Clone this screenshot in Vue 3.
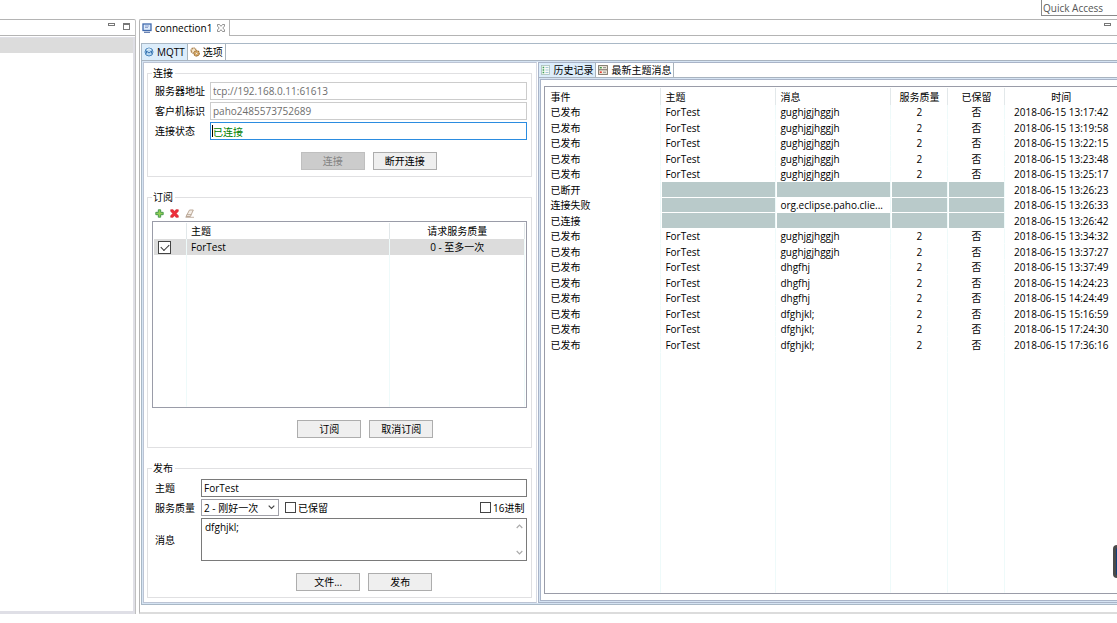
<script setup>
import { ref } from 'vue'

const server = ref('tcp://192.168.0.11:61613')
const clientId = ref('paho2485573752689')
const status = ref('已连接')
const topic = ref('ForTest')
const qos = ref('2 - 刚好一次')
const retained = ref(false)
const hex = ref(false)
const message = ref('dfghjkl;')
const subscribed = ref(true)

const published = (msg, time) => ({ event: '已发布', topic: 'ForTest', msg, qos: '2', retained: '否', time: '2018-06-15 ' + time })
const state = (event, msg, time) => ({ event, topic: '', msg, qos: '', retained: '', time: '2018-06-15 ' + time })

const history = [
  published('gughjgjhggjh', '13:17:42'),
  published('gughjgjhggjh', '13:19:58'),
  published('gughjgjhggjh', '13:22:15'),
  published('gughjgjhggjh', '13:23:48'),
  published('gughjgjhggjh', '13:25:17'),
  state('已断开', '', '13:26:23'),
  state('连接失败', 'org.eclipse.paho.clie...', '13:26:33'),
  state('已连接', '', '13:26:42'),
  published('gughjgjhggjh', '13:34:32'),
  published('gughjgjhggjh', '13:37:27'),
  published('dhgfhj', '13:37:49'),
  published('dhgfhj', '14:24:23'),
  published('dhgfhj', '14:24:49'),
  published('dfghjkl;', '15:16:59'),
  published('dfghjkl;', '17:24:30'),
  published('dfghjkl;', '17:36:16'),
]
</script>

<template>
  <div class="app">
    <header class="toolbar">
      <input class="quick" type="text" placeholder="Quick Access" aria-label="Quick Access" />
    </header>

    <div class="workbench">
      <aside class="navigator">
        <div class="nav-head">
          <button class="icon-btn" aria-label="最小化">
            <svg width="8" height="8" viewBox="0 0 8 8"><rect x="0.5" y="0.5" width="6" height="2" fill="#fff" stroke="#777" /></svg>
          </button>
          <button class="icon-btn" aria-label="最大化">
            <svg width="8" height="8" viewBox="0 0 8 8"><rect x="0.5" y="0.5" width="6" height="6" fill="#fff" stroke="#777" /><path d="M0 1.5h7" stroke="#777" /></svg>
          </button>
        </div>
        <div class="nav-body"><div class="nav-row"></div></div>
      </aside>

      <main class="editor">
        <div class="editor-head">
          <div class="editor-tab">
            <svg width="10" height="10" viewBox="0 0 10 10">
              <rect x="1" y="1" width="8" height="6.5" fill="#dceafa" stroke="#3f69ad" stroke-width="1.3" />
              <path d="M3 3h4M3 4.5h3" stroke="#7f93c4" stroke-width="0.8" />
              <path d="M2 9.3h6" stroke="#5b76ad" stroke-width="1.2" />
            </svg>
            <span>connection1</span>
            <button class="icon-btn" aria-label="关闭">
              <svg width="8" height="8" viewBox="0 0 8 8"><path d="M0.5 0.5h2l1.5 1.8L5.5 0.5h2v1.6L5.8 4l1.7 1.9v1.6h-2L4 5.7 2.500 7.500h-2V5.900L2.200 4 0.500 2.100z" fill="#fff" stroke="#777" stroke-width="0.8" /></svg>
            </button>
          </div>
          <div class="editor-rest">
            <button class="icon-btn" aria-label="最小化">
              <svg width="8" height="8" viewBox="0 0 8 8"><rect x="0.5" y="0.5" width="6" height="2" fill="#fff" stroke="#777" /></svg>
            </button>
          </div>
        </div>

        <section class="folder">
          <nav class="tabs">
            <button class="tab active">
              <svg width="10" height="10" viewBox="0 0 10 10">
                <circle cx="5" cy="5" r="4" fill="#b8d8f2" stroke="#4b86bd" />
                <path d="M2.500 6.500V4l2.500 2 2.500-2v2.500" fill="none" stroke="#3974b1" />
                <path d="M3 2.500q2-1.300 4 0" fill="none" stroke="#fff" stroke-width="0.8" />
              </svg>
              <span>MQTT</span>
            </button>
            <button class="tab">
              <svg width="10" height="10" viewBox="0 0 10 10">
                <circle cx="3.600" cy="3.600" r="2.500" fill="#f5e5c8" stroke="#a57c49" stroke-width="1.500" stroke-dasharray="1.200 0.700" />
                <circle cx="6.600" cy="6.400" r="2.600" fill="#edc078" stroke="#9a6d36" stroke-width="1.300" stroke-dasharray="1.400 0.500" />
                <circle cx="6.600" cy="6.400" r="1" fill="#fff" stroke="#a77b43" stroke-width="0.600" />
              </svg>
              <span>选项</span>
            </button>
          </nav>

          <div class="sash">
            <form class="form-pane" @submit.prevent>
              <fieldset class="group connect">
                <legend>连接</legend>
                <div class="fields wide">
                  <label for="server">服务器地址</label>
                  <input id="server" v-model="server" class="text muted" type="text" readonly />
                  <label for="client">客户机标识</label>
                  <input id="client" v-model="clientId" class="text muted" type="text" readonly />
                  <label for="status">连接状态</label>
                  <div class="status">
                    <input id="status" v-model="status" class="text focus" type="text" readonly />
                    <span class="caret"></span>
                  </div>
                  <div class="actions">
                    <button class="btn" disabled>连接</button>
                    <button class="btn">断开连接</button>
                  </div>
                </div>
              </fieldset>

              <fieldset class="group subs">
                <legend>订阅</legend>
                <div class="tools">
                  <button class="icon-btn" aria-label="添加">
                    <svg width="9" height="9" viewBox="0 0 9 9"><path d="M3.300 0.800h2.400v2.500h2.500v2.400H5.700v2.500H3.300V5.700H0.800V3.300h2.500z" fill="#92cf55" stroke="#3c9346" stroke-width="0.900" /></svg>
                  </button>
                  <button class="icon-btn" aria-label="删除">
                    <svg width="9" height="9" viewBox="0 0 9 9"><path d="M0.700 0.700h2.400L4.500 2.600 5.900 0.700h2.400v1.500L6.300 4.500l2 2.300v1.500H5.900L4.500 6.400 3.100 8.300H0.700V6.800l2-2.300-2-2.300z" fill="#ef2f3c" stroke="#cf2028" stroke-width="0.600" /></svg>
                  </button>
                  <button class="icon-btn" aria-label="清除">
                    <svg width="10" height="9" viewBox="0 0 10 9"><path d="M1 7.500L4.500 1h3.800L5.400 7.500zM1.800 5.700h4.300" fill="#f5eee7" stroke="#b4a08e" stroke-width="0.900" /><path d="M0.500 8.300h8.500" stroke="#b4a08e" stroke-width="0.800" /></svg>
                  </button>
                </div>
                <div class="table-box">
                  <table class="grid sub-grid">
                    <colgroup><col class="c-check" /><col class="c-topic" /><col /></colgroup>
                    <thead>
                      <tr><th></th><th>主题</th><th class="mid">请求服务质量</th></tr>
                    </thead>
                    <tbody>
                      <tr class="selected">
                        <td><input v-model="subscribed" class="check" type="checkbox" aria-label="ForTest" /></td>
                        <td>ForTest</td>
                        <td class="mid">0 - 至多一次</td>
                      </tr>
                      <tr class="filler"><td></td><td></td><td></td></tr>
                    </tbody>
                  </table>
                </div>
                <div class="actions">
                  <button class="btn">订阅</button>
                  <button class="btn">取消订阅</button>
                </div>
              </fieldset>

              <fieldset class="group publish">
                <legend>发布</legend>
                <div class="fields narrow">
                  <label for="topic">主题</label>
                  <input id="topic" v-model="topic" class="text" type="text" />
                  <label for="qos">服务质量</label>
                  <div class="options">
                    <div class="combo">
                      <select id="qos" v-model="qos">
                        <option>0 - 至多一次</option>
                        <option>1 - 至少一次</option>
                        <option>2 - 刚好一次</option>
                      </select>
                      <svg width="7" height="5" viewBox="0 0 7 5"><path d="M0.700 0.700L3.500 3.500 6.300 0.700" fill="none" stroke="#444" stroke-width="1.200" /></svg>
                    </div>
                    <label class="tick"><input v-model="retained" class="check" type="checkbox" />已保留</label>
                    <label class="tick end"><input v-model="hex" class="check" type="checkbox" />16进制</label>
                  </div>
                  <label for="message">消息</label>
                  <div class="area">
                    <textarea id="message" v-model="message"></textarea>
                    <div class="arrows">
                      <svg width="7" height="5" viewBox="0 0 7 5"><path d="M0.700 4L3.500 1.200 6.300 4" fill="none" stroke="#aaa" stroke-width="1.200" /></svg>
                      <svg width="7" height="5" viewBox="0 0 7 5"><path d="M0.700 1L3.500 3.800 6.300 1" fill="none" stroke="#aaa" stroke-width="1.200" /></svg>
                    </div>
                  </div>
                  <div class="actions">
                    <button class="btn">文件...</button>
                    <button class="btn">发布</button>
                  </div>
                </div>
              </fieldset>
            </form>

            <section class="history">
              <nav class="tabs inner">
                <button class="tab active">
                  <svg width="9" height="10" viewBox="0 0 9 10">
                    <rect x="0.500" y="0.500" width="8" height="9" fill="#f7fbf6" stroke="#a9bfb9" stroke-width="0.800" />
                    <path d="M1.600 2.500h1.600M1.600 5h1.600M1.600 7.500h1.600" stroke="#3f9f58" stroke-width="1.300" />
                    <path d="M4.500 2.500h3M4.500 5h3M4.500 7.500h3" stroke="#9cbfd8" stroke-width="0.900" />
                  </svg>
                  <span>历史记录</span>
                </button>
                <button class="tab">
                  <svg width="10" height="10" viewBox="0 0 10 10">
                    <rect x="0.600" y="0.600" width="8.800" height="8.800" fill="#f8f1e4" stroke="#7d7468" />
                    <path d="M1 4.800h8" stroke="#6d655a" />
                    <path d="M1.800 2.700h2" stroke="#3c9647" stroke-width="1.400" />
                    <path d="M1.800 7.200h2" stroke="#e33c30" stroke-width="1.600" />
                    <path d="M5 2.700h3M5 7.200h3" stroke="#777" stroke-width="0.900" />
                  </svg>
                  <span>最新主题消息</span>
                </button>
              </nav>
              <div class="history-body">
                <div class="table-box open">
                  <table class="grid log">
                    <colgroup>
                      <col class="c-wide" /><col class="c-wide" /><col class="c-wide" /><col class="c-slim" /><col class="c-slim" /><col />
                    </colgroup>
                    <thead>
                      <tr><th>事件</th><th>主题</th><th>消息</th><th class="mid">服务质量</th><th class="mid">已保留</th><th class="mid">时间</th></tr>
                    </thead>
                    <tbody>
                      <tr v-for="row in history" :key="row.time">
                        <td>{{ row.event }}</td>
                        <td :class="{ blank: !row.topic }">{{ row.topic }}</td>
                        <td :class="{ blank: !row.msg }">{{ row.msg }}</td>
                        <td class="mid" :class="{ blank: !row.qos }">{{ row.qos }}</td>
                        <td class="mid" :class="{ blank: !row.retained }">{{ row.retained }}</td>
                        <td class="mid">{{ row.time }}</td>
                      </tr>
                      <tr class="filler"><td></td><td></td><td></td><td></td><td></td><td></td></tr>
                    </tbody>
                  </table>
                </div>
              </div>
            </section>
          </div>
        </section>
      </main>
    </div>
    <div class="dock"></div>
  </div>
</template>

<style>
body {
  background: #fff;
}
</style>

<style scoped>
.app,
.app * {
  box-sizing: border-box;
}
.app {
  display: flex;
  flex-direction: column;
  min-height: 100vh;
  padding-bottom: 9px;
  overflow: hidden;
  color: #000;
  font: 10px/14px "Open Sans", "Noto Sans CJK SC", sans-serif;
}
button,
input,
select,
textarea {
  margin: 0;
  color: inherit;
  font: inherit;
}
svg {
  display: block;
  flex: none;
}
.toolbar {
  display: flex;
  justify-content: flex-end;
  height: 19px;
}
.quick {
  width: 76px;
  height: 16px;
  padding: 0 1px;
  border: solid #8a8a8a;
  border-width: 0 0 1px 1px;
  outline: none;
}
.quick::placeholder {
  color: #555;
  opacity: 1;
}
.workbench {
  display: flex;
  flex: 1;
  gap: 3px;
}
.icon-btn {
  display: flex;
  padding: 0;
  border: 0;
  background: none;
}

/* navigator view */
.navigator {
  display: flex;
  flex-direction: column;
  flex: none;
  width: 136px;
  border-top: 1px solid #b4b4b4;
  border-right: 1px solid #c0c0c0;
  border-radius: 0 2px 0 0;
}
.nav-head {
  display: flex;
  justify-content: flex-end;
  gap: 7px;
  height: 16px;
  padding: 3px 4px;
  border-bottom: 1px solid #b4b4b4;
}
.nav-body {
  flex: 1;
  margin-top: 1px;
  border: solid #dfdfe6;
  border-width: 1px 2px 3px 0;
}
.nav-row {
  height: 15px;
  background: #dcdcdc;
}

/* editor view */
.editor {
  display: flex;
  flex-direction: column;
  flex: 1;
  min-width: 0;
  border: solid #b4b4b4;
  border-width: 1px 0 0 1px;
  border-bottom: 2px solid #dcdcdc;
  border-radius: 2px 0 0 0;
}
.editor-head {
  display: flex;
  height: 16px;
}
.editor-tab {
  display: flex;
  align-items: center;
  gap: 3px;
  padding: 0 4px 0 2px;
  border-right: 1px solid #b4b4b4;
}
.editor-tab .icon-btn {
  margin-left: 2px;
}
.editor-rest {
  display: flex;
  flex: 1;
  justify-content: flex-end;
  padding: 3px 5px;
  border-bottom: 1px solid #b4b4b4;
}
.folder {
  display: flex;
  flex: 1;
  flex-direction: column;
  margin: 7px 0 7px 1px;
  border: solid #a9b8c6;
  border-width: 1px 0 1px 1px;
}
.tabs {
  display: flex;
  height: 17px;
  border-bottom: 1px solid #a9b4c0;
}
.tab {
  display: flex;
  align-items: center;
  gap: 3px;
  padding: 0 2px;
  border: 0;
  border-right: 1px solid #a9b4bc;
  background: #fff;
  white-space: nowrap;
}
.tab.active {
  background: #dcedfb;
}
.sash {
  display: grid;
  grid-template-columns: minmax(0, 394fr) minmax(0, 579fr);
  flex: 1;
  border: solid #d6e4f3;
  border-width: 1px 0 1px 1px;
}

/* form pane */
.form-pane {
  display: flex;
  flex-direction: column;
  padding: 3px 4px 4px 3px;
  border: 1px solid #bcc4d4;
  border-right-color: #d8dce6;
}
.group {
  min-width: 0;
  margin: 0;
  padding: 0 4px;
  border: 1px solid #e0e0e2;
}
legend {
  margin-left: 0;
  padding: 0 2px 0 1px;
}
.connect {
  padding-bottom: 6px;
}
.subs {
  display: flex;
  flex: 1;
  flex-direction: column;
  margin-top: 13px;
  padding-bottom: 9px;
}
.publish {
  margin-top: 13px;
  padding-bottom: 6px;
}
.fields {
  display: grid;
  gap: 2px 0;
  align-items: center;
  padding: 4px 0 0 3px;
}
.wide {
  grid-template-columns: 55px 1fr;
  padding-top: 2px;
}
.narrow {
  grid-template-columns: 46px 1fr;
}
.text {
  width: 100%;
  height: 18px;
  padding: 0 2px;
  border: 1px solid #7a7a7a;
  background: #fff;
  outline: none;
}
.text.muted {
  border-color: #cccccc;
  color: #6d6d6d;
}
.text.focus {
  display: block;
  border-color: #2b8ce0;
  color: #008000;
}
.status {
  position: relative;
}
.caret {
  position: absolute;
  top: 3px;
  left: 2px;
  width: 1px;
  height: 12px;
  background: #000;
}
.actions {
  display: flex;
  grid-column: 2;
  justify-content: center;
  gap: 8px;
  margin-top: 10px;
}
.subs .actions {
  margin-top: 12px;
  padding-left: 51px;
}
.btn {
  width: 64px;
  height: 18px;
  padding: 0;
  border: 1px solid #adadad;
  background: #efefef;
}
.btn:disabled {
  border-color: #bfbfbf;
  background: #cccccc;
  color: #838383;
}
.tools {
  display: flex;
  gap: 6px;
  padding: 5px 3px 3px;
}

/* tables */
.table-box {
  display: grid;
  flex: 1;
  border: 1px solid #9a9ca8;
  padding: 1px 1px 0;
}
.table-box.open {
  border-right: 0;
  padding-right: 0;
}
.grid {
  width: 100%;
  height: 100%;
  border-spacing: 0;
  table-layout: fixed;
}
.grid th,
.grid td {
  padding: 0 0 0 4px;
  border-right: 1px solid #eefafa;
  line-height: 14px;
  font-weight: normal;
  text-align: left;
  white-space: nowrap;
}
.grid th {
  height: 16px;
  border-right-color: #e2e8ea;
}
.grid.log th {
  height: 17px;
}
.grid .mid {
  padding: 0;
  text-align: center;
}
.grid td {
  border-bottom: 1px solid transparent;
}
.grid.log th:last-child,
.grid.log td:last-child {
  border-right: 0;
}
.log td {
  height: 15px;
}
.log tr:nth-child(even) td {
  height: 16px;
}
.grid .filler td {
  height: auto;
}
.log .blank {
  border-left: 1px solid #fff;
  border-bottom-color: #fff;
  background: #b9caca;
}
.c-wide {
  width: 115px;
}
.c-slim {
  width: 57px;
}
.c-check {
  width: 33px;
}
.c-topic {
  width: 203px;
}
.selected td {
  height: 16px;
  border-bottom: 0;
  background: #dcdcdc;
}
.check {
  display: block;
  flex: none;
  width: 11px;
  height: 11px;
  border: 1px solid #444;
  background: #fff;
  appearance: none;
}
.sub-grid .check {
  width: 13px;
  height: 13px;
}
.check:checked::after {
  content: "";
  display: block;
  width: 7px;
  height: 4px;
  margin: 2px;
  border: solid #333;
  border-width: 0 0 1px 1px;
  transform: rotate(-45deg);
}

/* publish form */
.options {
  display: flex;
  align-items: center;
}
.combo {
  position: relative;
  width: 78px;
}
.combo select {
  display: block;
  width: 100%;
  height: 17px;
  padding: 0 2px;
  border: 1px solid #a0a0a8;
  border-radius: 0;
  background: #fff;
  appearance: none;
}
.combo svg {
  position: absolute;
  top: 6px;
  right: 4px;
  pointer-events: none;
}
.tick {
  display: flex;
  align-items: center;
  gap: 2px;
  margin-left: 6px;
}
.tick.end {
  margin-right: 3px;
  margin-left: auto;
}
.area {
  position: relative;
}
.area textarea {
  display: block;
  width: 100%;
  height: 43px;
  padding: 1px 3px;
  border: 1px solid #7a7a7a;
  outline: none;
  overflow: hidden;
  resize: none;
}
.arrows {
  position: absolute;
  top: 6px;
  right: 4px;
  bottom: 6px;
  display: flex;
  flex-direction: column;
  justify-content: space-between;
}

/* history pane */
.history {
  display: flex;
  flex-direction: column;
  margin-left: 1px;
  border: solid #a9b4c8;
  border-width: 1px 0 1px 1px;
}
.tabs.inner {
  height: 15px;
}
.history-body {
  display: flex;
  flex: 1;
  flex-direction: column;
  padding: 7px 0 7px 4px;
  border: solid #d6e4f3;
  border-width: 1px 0 1px 1px;
  box-shadow: inset 1px 1px #a9b4c8, inset 0 -1px #a9b4c8;
}

/* docked side widget */
.dock {
  position: fixed;
  top: 545px;
  right: 0;
  width: 4px;
  height: 33px;
  border: solid #4a4a4a;
  border-width: 3px 0 3px 3px;
  border-radius: 4px 0 0 4px;
  background: #12407a;
}
</style>
